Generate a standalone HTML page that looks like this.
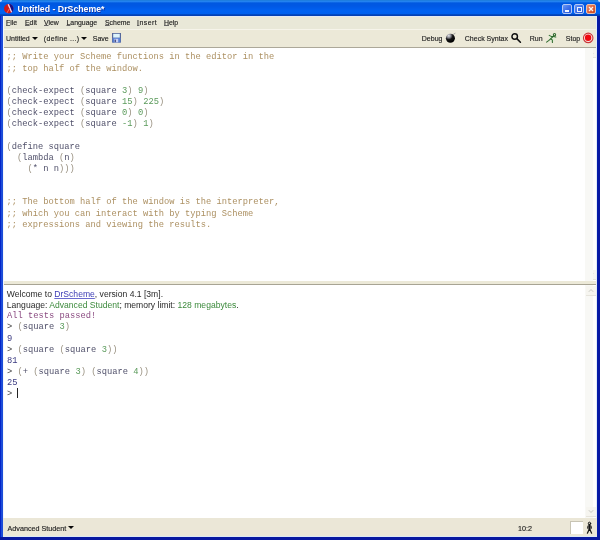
<!DOCTYPE html>
<html><head><meta charset="utf-8">
<style>
*{margin:0;padding:0;box-sizing:border-box}
html,body{width:600px;height:540px;overflow:hidden;background:#fff}
body{position:relative;font-family:"Liberation Sans",sans-serif}
.a{position:absolute}
#win{left:0;top:0;width:600px;height:540px;background:linear-gradient(90deg,#0424c8 0,#0424c8 0.8px,#1c4cd8 1.2px,#1c4cd8 2.5px,#3a60c8 3px,#0020b0 597px,#0818a4 598px,#0818a0 600px)}
#title{left:0;top:0;width:600px;height:16px;background:linear-gradient(#1070d0 0,#2c8cf0 1px,#2080f0 1.6px,#0058e0 3px,#0058e4 6px,#0062f2 11px,#0060ee 13.5px,#0040b0 15px,#0a40b8 16px)}
#tt{left:17.5px;top:4.4px;font-size:8.75px;line-height:11px;font-weight:bold;color:#fff;white-space:nowrap;text-shadow:0.6px 0.6px 0 #0a2a9a}
.tb{top:4px;width:10px;height:10px;border:1px solid #b4c8f4;border-radius:2px;background:linear-gradient(135deg,#6a98f4,#3a6ce8 55%,#2858d8)}
#menubar{left:3px;top:16px;width:594px;height:14px;background:#e9e8d8;border-top:1px solid #e4eaf2;border-bottom:1px solid #f6f4ea}
.m{top:18.2px;font-size:6.9px;line-height:9px;color:#161616;-webkit-text-stroke:0.15px #333;white-space:nowrap}
.m u{text-decoration:underline;text-decoration-thickness:0.5px;text-underline-offset:0.4px;text-decoration-color:#666}
#toolbar{left:3px;top:30px;width:594px;height:18px;background:#ece9d8;border-bottom:1px solid #aca899}
.t{font-size:7px;line-height:9px;color:#161616;-webkit-text-stroke:0.15px #333;white-space:nowrap;top:34.2px}
#editor{left:3px;top:48px;width:594px;height:233px;background:#fff}
#split{left:3px;top:281px;width:594px;height:4px;background:#ece9d8;border-bottom:1px solid #a8a494}
#repl{left:3px;top:285px;width:594px;height:233px;background:#fff}
#status{left:3px;top:518px;width:594px;height:19px;background:#ebe7d7;border-bottom:1px solid #dce8f4}
#bot{left:0;top:537px;width:600px;height:3px;background:#0818a0}
.code{font-family:"Liberation Mono",monospace;font-size:8.75px;line-height:11.16px;white-space:pre}
.cm{color:#ac9062}
.p{color:#9a9282}
.s{color:#50506a}
.n{color:#5a9a5a}
.v{color:#3a3a80}
.tri{width:0;height:0;border-left:3px solid transparent;border-right:3px solid transparent;border-top:3.3px solid #080808}
.sans{font-family:"Liberation Sans",sans-serif;font-size:8.58px;line-height:11px;white-space:pre;color:#2a2a2a}
.sb{left:586px;width:10px;height:10px;background:#f6f5f0;border-bottom:1px solid #e6e4dc}
</style></head><body><div id="root" class="a" style="left:0;top:0;width:600px;height:540px;will-change:transform">
<div id="win" class="a"></div>
<div id="title" class="a"></div>
<!-- logo -->
<svg class="a" style="left:3px;top:3px" width="12" height="12" viewBox="0 0 12 12">
  <defs><clipPath id="c"><circle cx="5.7" cy="5.7" r="4.7"/></clipPath></defs>
  <circle cx="5.7" cy="5.7" r="4.7" fill="#d01818"/>
  <g clip-path="url(#c)">
    <path d="M6 0 L12 0 L12 12 L9.8 12 Z" fill="#10108a"/>
    <path d="M5.2 1.2 L9.2 10.5" stroke="#f4d8f0" stroke-width="1.3"/>
    <path d="M6.8 5 L3.6 10.5" stroke="#f07868" stroke-width="0.9"/>
  </g>
</svg>
<div id="tt" class="a">Untitled - DrScheme*</div>
<div class="a tb" style="left:562px"><div class="a" style="left:2px;top:5.2px;width:3.5px;height:1.5px;background:#f4f8ff"></div></div>
<div class="a tb" style="left:574px"><div class="a" style="left:1.5px;top:2px;width:5.5px;height:4.5px;border:0.8px solid #eef4ff;border-top-width:1.5px"></div></div>
<div class="a tb" style="left:586px;border-color:#e8c0b0;background:linear-gradient(135deg,#f09070,#e06038 55%,#c84820)">
  <svg class="a" style="left:0;top:0" width="8" height="8" viewBox="0 0 8 8"><path d="M2 2 L6 6 M6 2 L2 6" stroke="#fff4f0" stroke-width="1.3"/></svg>
</div>
<div class="a" style="left:0;top:0;width:2px;height:2px;background:#c8d8f8;border-bottom-right-radius:2px"></div>
<div class="a" style="left:598px;top:0;width:2px;height:2px;background:#c8d8f8;border-bottom-left-radius:2px"></div>

<div id="menubar" class="a"></div>
<div class="a m" style="left:6px"><u>F</u>ile</div>
<div class="a m" style="left:25px"><u>E</u>dit</div>
<div class="a m" style="left:44px"><u>V</u>iew</div>
<div class="a m" style="left:66.5px"><u>L</u>anguage</div>
<div class="a m" style="left:105px"><u>S</u>cheme</div>
<div class="a m" style="left:137px;letter-spacing:0.5px"><u>I</u>nsert</div>
<div class="a m" style="left:164px"><u>H</u>elp</div>

<div id="toolbar" class="a"></div>
<div class="a t" style="left:6px">Untitled</div>
<div class="a tri" style="left:32.2px;top:36.8px"></div>
<div class="a t" style="left:43.8px;letter-spacing:0.35px">(define ...)</div>
<div class="a tri" style="left:80.6px;top:36.8px"></div>
<div class="a t" style="left:92.8px">Save</div>
<!-- floppy -->
<svg class="a" style="left:111px;top:32px" width="11" height="11" viewBox="0 0 11 11">
  <rect x="1" y="1" width="9" height="9.6" fill="#56689a"/>
  <rect x="1.6" y="5.8" width="7.8" height="4.6" fill="#5a82d4"/>
  <rect x="2.2" y="1.8" width="6.6" height="3.8" fill="#dcf4fc"/>
  <rect x="3.2" y="6.8" width="4" height="3.6" fill="#c8d0f4"/>
  <rect x="3.6" y="7.6" width="1.3" height="2.6" fill="#3c4478"/>
</svg>

<div class="a t" style="left:421.8px">Debug</div>
<!-- bomb -->
<svg class="a" style="left:444px;top:32px" width="13" height="12" viewBox="0 0 13 12">
  <defs><radialGradient id="bg" cx="0.32" cy="0.22" r="0.75"><stop offset="0" stop-color="#e4e4ea"/><stop offset="0.3" stop-color="#8a8a90"/><stop offset="0.58" stop-color="#141414"/><stop offset="1" stop-color="#000"/></radialGradient></defs>
  <circle cx="6.4" cy="6.2" r="4.5" fill="url(#bg)"/>
  <path d="M9 2.6 L11.4 1.2" stroke="#9a9a9a" stroke-width="0.9"/>
</svg>
<div class="a t" style="left:464.8px">Check Syntax</div>
<!-- magnifier -->
<svg class="a" style="left:510px;top:32px" width="13" height="12" viewBox="0 0 13 12">
  <circle cx="4.7" cy="4.5" r="2.75" fill="none" stroke="#111" stroke-width="1.45"/>
  <path d="M6.8 6.6 L10.4 10.2" stroke="#111" stroke-width="1.6" stroke-linecap="round"/>
</svg>
<div class="a t" style="left:529.8px">Run</div>
<!-- runner -->
<svg class="a" style="left:544px;top:32px" width="14" height="12" viewBox="0 0 14 12">
  <circle cx="8" cy="6.5" r="3.2" fill="#d8f0d0" opacity="0.6"/>
  <g fill="none" stroke="#2e6a2e" stroke-width="1.05" stroke-linecap="round" stroke-linejoin="round">
    <circle cx="10.5" cy="2.7" r="1.15"/>
    <path d="M9.6 4 L6.6 6.9 L4.6 8.6 L2.6 10.2"/>
    <path d="M6.6 6.9 L8.3 7.9 L8.4 10.4"/>
    <path d="M5.2 3.4 L7.2 4.4 L9.4 4.4 L11.8 5"/>
  </g>
</svg>
<div class="a t" style="left:565.8px">Stop</div>
<!-- stop -->
<svg class="a" style="left:582px;top:32px" width="13" height="13" viewBox="0 0 13 13">
  <circle cx="6.2" cy="5.9" r="5.6" fill="#fbe4e0"/>
  <circle cx="6.2" cy="5.9" r="4.75" fill="none" stroke="#c83a3a" stroke-width="1.1"/>
  <circle cx="6.1" cy="5.8" r="3.2" fill="#f00810"/>
</svg>

<div id="editor" class="a"></div>
<div class="a sb" style="top:48px"><svg class="a" style="left:2px;top:2px" width="6" height="5"><path d="M0.8 3.8 L3 1.5 L5.2 3.8" fill="none" stroke="#c8c8c0" stroke-width="1"/></svg></div>
<div class="a sb" style="top:270px"><svg class="a" style="left:2px;top:2px" width="6" height="5"><path d="M0.8 1.2 L3 3.5 L5.2 1.2" fill="none" stroke="#c8c8c0" stroke-width="1"/></svg></div>
<div class="a code" style="left:6.5px;top:52.4px"><span class="cm">;; Write your Scheme functions in the editor in the
;; top half of the window.</span>

<span class="p">(</span><span class="s">check-expect</span> <span class="p">(</span><span class="s">square</span> <span class="n">3</span><span class="p">)</span> <span class="n">9</span><span class="p">)</span>
<span class="p">(</span><span class="s">check-expect</span> <span class="p">(</span><span class="s">square</span> <span class="n">15</span><span class="p">)</span> <span class="n">225</span><span class="p">)</span>
<span class="p">(</span><span class="s">check-expect</span> <span class="p">(</span><span class="s">square</span> <span class="n">0</span><span class="p">)</span> <span class="n">0</span><span class="p">)</span>
<span class="p">(</span><span class="s">check-expect</span> <span class="p">(</span><span class="s">square</span> <span class="n">-1</span><span class="p">)</span> <span class="n">1</span><span class="p">)</span>

<span class="p">(</span><span class="s">define</span> <span class="s">square</span>
  <span class="p">(</span><span class="s">lambda</span> <span class="p">(</span><span class="s">n</span><span class="p">)</span>
    <span class="p">(</span><span class="s">*</span> <span class="s">n</span> <span class="s">n</span><span class="p">)))</span>


<span class="cm">;; The bottom half of the window is the interpreter,
;; which you can interact with by typing Scheme
;; expressions and viewing the results.</span></div>

<div id="split" class="a"></div>
<div id="repl" class="a"></div>
<div class="a" style="left:585px;top:48px;width:8px;height:233px;background:#f8f8f5"></div>
<div class="a" style="left:585px;top:285px;width:8px;height:233px;background:#f8f8f5"></div>
<div class="a" style="left:596px;top:16px;width:1px;height:521px;background:#e4ecf8"></div>
<div class="a" style="left:3px;top:16px;width:0.8px;height:521px;background:#f2f5fa"></div>
<div class="a sb" style="top:286px"><svg class="a" style="left:2px;top:2px" width="6" height="5"><path d="M0.8 3.8 L3 1.5 L5.2 3.8" fill="none" stroke="#c8c8c0" stroke-width="1"/></svg></div>
<div class="a sb" style="top:507px"><svg class="a" style="left:2px;top:2px" width="6" height="5"><path d="M0.8 1.2 L3 3.5 L5.2 1.2" fill="none" stroke="#c8c8c0" stroke-width="1"/></svg></div>
<div class="a sans" style="left:6.8px;top:288.7px">Welcome to <span style="color:#3c3cb4;text-decoration:underline;text-decoration-thickness:0.7px;text-decoration-color:#6a6ad0">DrScheme</span>, version 4.1 [3m].
Language: <span style="color:#3c8a3c">Advanced Student</span>; memory limit: <span style="color:#3c8a3c">128 megabytes</span>.</div>
<div class="a code" style="left:7px;top:311.3px"><span style="color:#8a4a80">All tests passed!</span>
<span style="color:#444">&gt;</span> <span class="p">(</span><span class="s">square</span> <span class="n">3</span><span class="p">)</span>
<span class="v">9</span>
<span style="color:#444">&gt;</span> <span class="p">(</span><span class="s">square</span> <span class="p">(</span><span class="s">square</span> <span class="n">3</span><span class="p">))</span>
<span class="v">81</span>
<span style="color:#444">&gt;</span> <span class="p">(</span><span class="s">+</span> <span class="p">(</span><span class="s">square</span> <span class="n">3</span><span class="p">)</span> <span class="p">(</span><span class="s">square</span> <span class="n">4</span><span class="p">))</span>
<span class="v">25</span>
<span style="color:#444">&gt;</span> </div>
<div class="a" style="left:17px;top:388px;width:1px;height:10px;background:#222"></div>

<div id="status" class="a"></div><div id="bot" class="a"></div>
<div class="a t" style="left:7.5px;top:523.7px;font-size:7.2px">Advanced Student</div>
<div class="a tri" style="left:68.2px;top:526.3px"></div>
<div class="a t" style="left:518px;top:523.7px;font-size:7.2px">10:2</div>
<div class="a" style="left:570px;top:521px;width:12.5px;height:12.5px;background:#fff;border-left:1px solid #c8c4b4;border-top:1px solid #c8c4b4"></div>
<!-- walker -->
<svg class="a" style="left:585px;top:521px" width="9" height="14" viewBox="0 0 9 14">
  <g fill="none" stroke="#141414" stroke-linecap="round" stroke-linejoin="round">
    <circle cx="4.5" cy="2.4" r="1.2" stroke-width="1"/>
    <path d="M4.5 3.8 L4.5 7.8" stroke-width="2.2"/>
    <path d="M3 5 L2.6 7.2 M6 5 L6.4 7.2" stroke-width="1"/>
    <path d="M4.3 8 L2.4 12.2 M4.7 8 L6.6 12.2" stroke-width="1.2"/>
  </g>
</svg>
</div></body></html>
